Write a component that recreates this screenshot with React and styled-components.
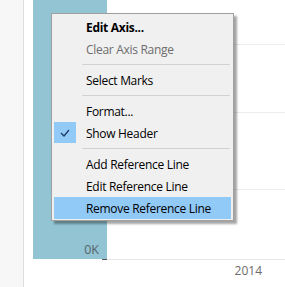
import React from 'react';
import styled, { createGlobalStyle } from 'styled-components';

const GlobalStyle = createGlobalStyle`
  html, body {
    margin: 0;
    padding: 0;
    background: #ffffff;
  }
  body {
    width: 285px;
    height: 287px;
    overflow: hidden;
    font-family: "Open Sans", "Noto Sans", sans-serif;
  }
`;

// Layout
const Page = styled.div`
  position: relative;
  display: flex;
  width: 285px;
  height: 287px;
  background: #ffffff;
`;

const SidePanel = styled.div`
  width: 23px;
  flex-shrink: 0;
  background: #f7f7f7;
  border-right: 1px solid #dedede;
`;

const Chart = styled.div`
  flex: 1;
  display: flex;
  flex-direction: column;
`;

const Plot = styled.div`
  display: flex;
  height: 259px;
  padding-left: 9px;
`;

const Bar = styled.div`
  width: 74px;
  flex-shrink: 0;
  background: #92c4d3;
  display: flex;
  align-items: flex-end;
  justify-content: flex-end;
  padding: 0 8px 2px 0;
  box-sizing: border-box;
`;

const BarLabel = styled.span`
  font-size: 12.5px;
  line-height: 14px;
  color: #56656a;
`;

const GridArea = styled.div`
  flex: 1;
  display: flex;
  flex-direction: column;
`;

const GridBand = styled.div`
  height: ${p => p.$h}px;
  border-bottom: ${p => (p.$last ? 'none' : '1px solid #ececec')};
`;

const AxisLine = styled.div`
  display: flex;
  height: 1px;
`;

const AxisGap = styled.div`
  width: 78px;
`;

const Tick = styled.div`
  width: 5px;
  background: #555;
`;

const AxisRule = styled.div`
  flex: 1;
  background: #e6e6e6;
`;

const AxisLabels = styled.div`
  display: flex;
  justify-content: flex-end;
  padding: 4px 23px 0 0;
`;

const YearLabel = styled.span`
  font-size: 12px;
  line-height: 14px;
  color: #6b6b6b;
`;

// Context menu (overlay)
const Menu = styled.div`
  position: absolute;
  left: 51px;
  top: 13px;
  width: 181px;
  background: #f0f0f0;
  border: 1px solid #a0a0a0;
  padding: 2px 0 1px;
  box-shadow: 3px 3px 2px rgba(0, 0, 0, 0.35);
`;

const Item = styled.div`
  position: relative;
  height: 22px;
  margin: 0 2px;
  padding-left: 32px;
  display: flex;
  align-items: center;
  font-size: 12px;
  letter-spacing: -0.3px;
  white-space: nowrap;
  color: ${p => (p.$disabled ? '#6d6d6d' : '#000000')};
  font-weight: ${p => (p.$bold ? 700 : 400)};
  background: ${p => (p.$active ? '#91c9f7' : 'transparent')};
`;

const CheckBox = styled.span`
  position: absolute;
  left: 0;
  top: 0;
  width: 22px;
  height: 21px;
  background: #91c9f7;
  display: flex;
  align-items: center;
  justify-content: center;
`;

const Separator = styled.div`
  height: 9px;
  display: flex;
  align-items: center;
  padding: 0 3px 0 30px;

  &::after {
    content: '';
    flex: 1;
    height: 1px;
    background: #d2d2d2;
  }
`;

const CheckIcon = () => (
  <svg width="10" height="8" viewBox="0 0 10 8">
    <polyline points="1,4 4,7 9,1" fill="none" stroke="#1f3a64" strokeWidth="1.3" />
  </svg>
);

const menuEntries = [
  { label: 'Edit Axis...', bold: true },
  { label: 'Clear Axis Range', disabled: true },
  { sep: true },
  { label: 'Select Marks' },
  { sep: true },
  { label: 'Format...' },
  { label: 'Show Header', checked: true },
  { sep: true },
  { label: 'Add Reference Line' },
  { label: 'Edit Reference Line' },
  { label: 'Remove Reference Line', active: true },
];

const App = () => {
  return (
    <>
      <GlobalStyle />
      <Page>
        <SidePanel />
        <Chart>
          <Plot>
            <Bar>
              <BarLabel>0K</BarLabel>
            </Bar>
            <GridArea>
              <GridBand $h={44} />
              <GridBand $h={68} />
              <GridBand $h={76} />
              <GridBand $h={70} $last />
            </GridArea>
          </Plot>
          <AxisLine>
            <AxisGap />
            <Tick />
            <AxisRule />
          </AxisLine>
          <AxisLabels>
            <YearLabel>2014</YearLabel>
          </AxisLabels>
        </Chart>

        <Menu>
          {menuEntries.map((e, i) =>
            e.sep ? (
              <Separator key={i} />
            ) : (
              <Item key={i} $bold={e.bold} $disabled={e.disabled} $active={e.active}>
                {e.checked && (
                  <CheckBox>
                    <CheckIcon />
                  </CheckBox>
                )}
                {e.label}
              </Item>
            )
          )}
        </Menu>
      </Page>
    </>
  );
};

export default App;
